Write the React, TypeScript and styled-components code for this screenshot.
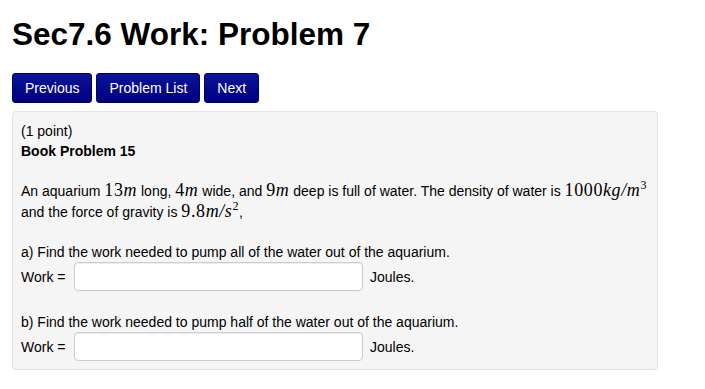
import styled, { createGlobalStyle } from 'styled-components';

const Global = createGlobalStyle`
  body {
    margin: 0;
    background: #fff;
    font-family: "Liberation Sans", Arial, sans-serif;
    color: #333;
  }
`;

const Page = styled.div`
  padding: 14px 12px 0 12px;
`;

const Title = styled.h1`
  margin: 0;
  font-size: 31.5px;
  line-height: 40px;
  font-weight: 700;
  color: #000;
`;

const NavBar = styled.div`
  display: flex;
  gap: 4px;
  margin-top: 19px;
`;

const NavButton = styled.button`
  height: 30px;
  padding: 0 12px;
  border: 1px solid #000066;
  border-radius: 3px;
  background: linear-gradient(#0a1498, #00007f);
  color: #fff;
  font-family: "Liberation Sans", Arial, sans-serif;
  font-size: 14px;
  cursor: pointer;
`;

const Panel = styled.div`
  margin-top: 8px;
  width: 646px;
  box-sizing: border-box;
  padding: 9px 8px 8px 8px;
  background: #f5f5f5;
  border: 1px solid #e3e3e3;
  border-radius: 4px;
  font-size: 14px;
  line-height: 20px;
  color: #000;
`;

const Line = styled.div<{ $gap?: number; $bold?: boolean }>`
  margin-top: ${(p) => p.$gap ?? 0}px;
  font-weight: ${(p) => (p.$bold ? 700 : 400)};
`;

const Para = styled.div`
  margin-top: 20px;
  line-height: 21px;
`;

const M = styled.span`
  font-family: "Liberation Serif", "DejaVu Serif", serif;
  font-size: 18px;
  line-height: 1;
  font-style: italic;
  letter-spacing: 0.6px;
`;

const Num = styled.span`
  font-style: normal;
`;

const Sup = styled.sup`
  font-size: 12px;
  line-height: 0;
  font-style: normal;
`;

const AnswerRow = styled.div`
  display: flex;
  align-items: center;
`;

const Label = styled.span`
  width: 53px;
`;

const Field = styled.input`
  width: 289px;
  height: 29px;
  box-sizing: border-box;
  border: 1px solid #ccc;
  border-radius: 4px;
  background: #fff;
  box-shadow: inset 0 1px 1px rgba(0, 0, 0, 0.075);
  margin-right: 7px;
`;

function Math({ num, unit, sup }: { num: string; unit: string; sup?: string }) {
  return (
    <M>
      <Num>{num}</Num>
      {unit}
      {sup && <Sup>{sup}</Sup>}
    </M>
  );
}

export default function App() {
  return (
    <>
      <Global />
      <Page>
        <Title>Sec7.6 Work: Problem 7</Title>
        <NavBar>
          <NavButton>Previous</NavButton>
          <NavButton>Problem List</NavButton>
          <NavButton>Next</NavButton>
        </NavBar>
        <Panel>
          <Line>(1 point)</Line>
          <Line $bold>Book Problem 15</Line>
          <Para>
            An aquarium <Math num="13" unit="m" /> long, <Math num="4" unit="m" /> wide, and{' '}
            <Math num="9" unit="m" /> deep is full of water. The density of water is{' '}
            <Math num="1000" unit="kg/m" sup="3" />
            <br />
            and the force of gravity is <Math num="9.8" unit="m/s" sup="2" />,
          </Para>
          <Line $gap={19}>a) Find the work needed to pump all of the water out of the aquarium.</Line>
          <AnswerRow>
            <Label>Work =</Label>
            <Field />
            <span>Joules.</span>
          </AnswerRow>
          <Line $gap={21}>b) Find the work needed to pump half of the water out of the aquarium.</Line>
          <AnswerRow>
            <Label>Work =</Label>
            <Field />
            <span>Joules.</span>
          </AnswerRow>
        </Panel>
      </Page>
    </>
  );
}
